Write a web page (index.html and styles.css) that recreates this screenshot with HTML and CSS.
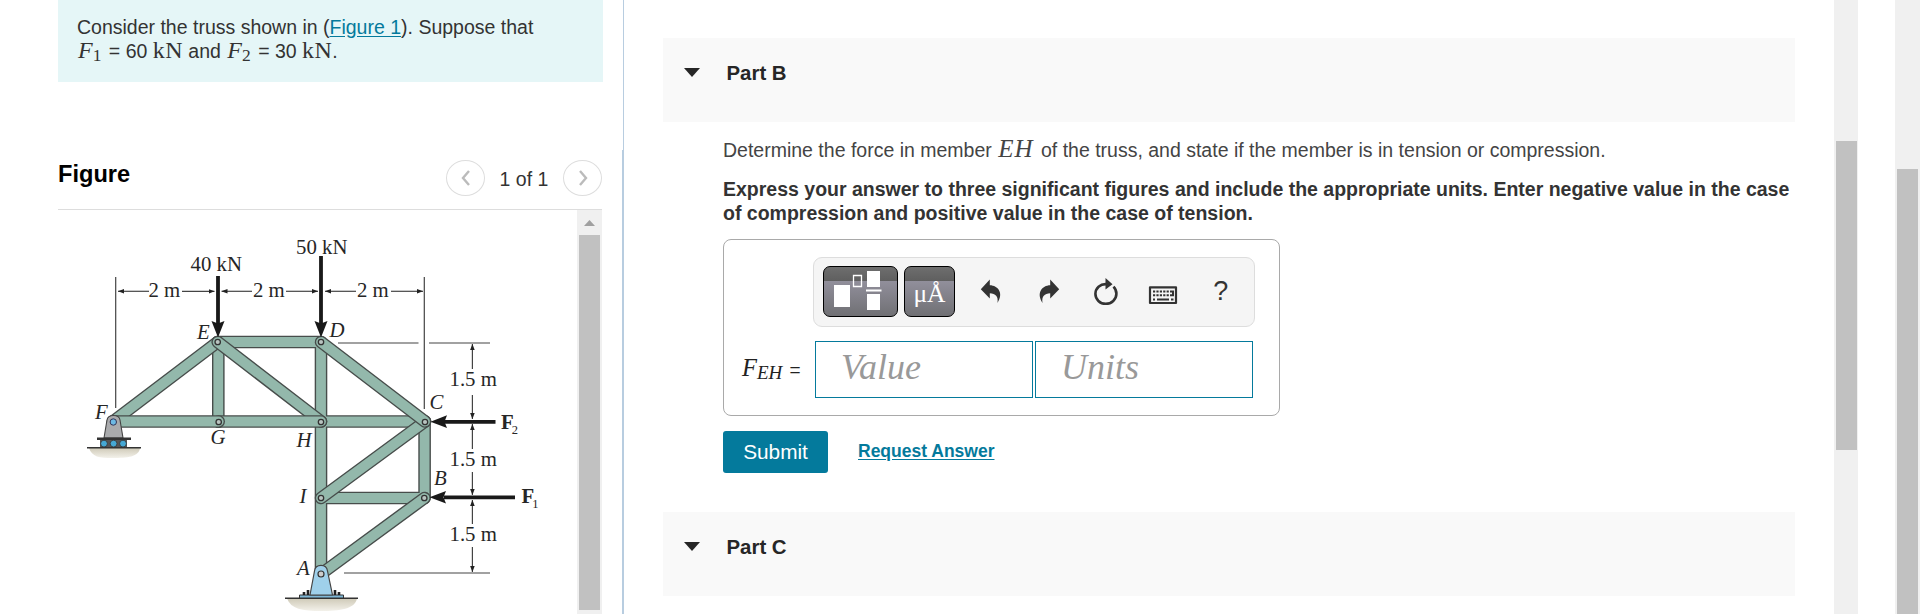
FILE: index.html
```html
<!DOCTYPE html>
<html lang="en">
<head>
    <meta charset="UTF-8">
    <meta name="viewport" content="width=device-width, initial-scale=1.0">
    <title>Truss Problem</title>
    <link rel="stylesheet" href="styles.css">
</head>
<body>

    <!-- Left side: problem statement and figure -->
    <div class="left-panel">
        <div class="problem">
            Consider the truss shown in (<a href="#figure">Figure 1</a>). Suppose that<br>
            <span class="math"><i>F</i><sub>1</sub></span> <span class="eq">=</span> 60 <span class="math unit">kN</span> and <span class="math"><i>F</i><sub>2</sub></span> <span class="eq">=</span> 30 <span class="math unit">kN</span>.
        </div>

        <div class="figure-header">
            <h2>Figure</h2>
            <div class="pager">
                <button class="round" aria-label="Previous"><svg width="12" height="18" viewBox="0 0 12 18"><path d="M9 2L3 9l6 7"/></svg></button>
                <span>1 of 1</span>
                <button class="round" aria-label="Next"><svg width="12" height="18" viewBox="0 0 12 18"><path d="M3 2l6 7-6 7"/></svg></button>
            </div>
        </div>

        <div class="figure-body" id="figure">
            <svg class="truss" width="519" height="404" viewBox="58 210 519 404">
                <defs>
                    <linearGradient id="ground" x1="0" y1="0" x2="0" y2="1">
                        <stop offset="0" stop-color="#cfcab8"/>
                        <stop offset="1" stop-color="#f3f1ea"/>
                    </linearGradient>
                    <marker id="tip" viewBox="0 0 6 6" refX="6" refY="3" markerWidth="6" markerHeight="6" markerUnits="userSpaceOnUse" orient="auto">
                        <path d="M0 .7L6 3 0 5.3z" fill="#222"/>
                    </marker>
                </defs>

                <!-- dimension lines -->
                <g class="dim">
                    <path d="M115.7 277V408M424.3 277V409M338 343H418.5M429 343H490M344 573H490"/>
                    <g marker-end="url(#tip)">
                        <path d="M149 291.3H118"/>
                        <path d="M182 291.3H214.5"/>
                        <path d="M252 291.3H221.5"/>
                        <path d="M286 291.3H318"/>
                        <path d="M356 291.3H325"/>
                        <path d="M391 291.3H423"/>
                        <path d="M472.4 369V344"/>
                        <path d="M472.4 395V419"/>
                        <path d="M472.4 449V424"/>
                        <path d="M472.4 472V495"/>
                        <path d="M472.4 524V500"/>
                        <path d="M472.4 547V572"/>
                    </g>
                </g>

                <!-- ground under F -->
                <path d="M89 448H140C139 457 127 458 113 458S92 457 89 448z" fill="url(#ground)"/>
                <path d="M87 447.7H141" stroke="#333" stroke-width="1.4"/>

                <!-- members -->
                <path class="bar-edge" d="M217.7 342H321M218.3 342V421.5M321 342V574M321 421.5H425M424.6 421.5V498M321 498H424.5"/>
                <path class="bar" d="M217.7 342H321M218.3 342V421.5M321 342V574M321 421.5H425M424.6 421.5V498M321 498H424.5"/>
                <path class="bar-edge" d="M113 421.5L217.7 342"/><path class="bar" d="M113 421.5L217.7 342"/>
                <path class="bar-edge" d="M217.7 342L321 421.5"/><path class="bar" d="M217.7 342L321 421.5"/>
                <path class="bar-edge" d="M321 498L425 421.5"/><path class="bar" d="M321 498L425 421.5"/>
                <path class="bar-edge" d="M321 342L425 421.5"/><path class="bar" d="M321 342L425 421.5"/>
                <path class="bar-edge" d="M321 574L424.5 498"/><path class="bar" d="M321 574L424.5 498"/>
                <path class="bar-edge" d="M218.7 421.5H321"/><path class="bar" d="M218.7 421.5H321"/>
                <path class="bar-edge" d="M113 421.5H218.7"/><path class="bar" d="M113 421.5H218.7"/>

                <!-- pins -->
                <g class="pin">
                    <circle cx="217.7" cy="342" r="2.7"/>
                    <circle cx="321" cy="342" r="2.7"/>
                    <circle cx="218.7" cy="422" r="2.7"/>
                    <circle cx="321" cy="422" r="2.7"/>
                    <circle cx="425" cy="422" r="2.7"/>
                    <circle cx="321" cy="498" r="2.7"/>
                    <circle cx="424.3" cy="498" r="2.7"/>
                </g>

                <!-- roller support -->
                <path d="M104 438L107 420C108 414 119 414 120 420L123 438z" fill="#aaabad" stroke="#444" stroke-width="1.1"/>
                <circle cx="113.3" cy="422" r="3.2" fill="#6cb9e4" stroke="#335" stroke-width="1"/>
                <path d="M97 438.8H131" stroke="#333" stroke-width="2.6"/>
                <path d="M100 440H127V447H100z" fill="#555"/>
                <g fill="#45a8d4" stroke="#333" stroke-width=".8">
                    <circle cx="104" cy="443.6" r="3.4"/>
                    <circle cx="113.6" cy="443.6" r="3.4"/>
                    <circle cx="123" cy="443.6" r="3.4"/>
                </g>

                <!-- fixed support at A -->
                <path d="M287 598.5H357C355 609 340 611 321 611S291 609 287 598.5z" fill="url(#ground)"/>
                <path d="M285 598.3H358" stroke="#333" stroke-width="1.4"/>
                <path d="M299.5 598V595H343.5V598z" fill="#7fb7d6" stroke="#333" stroke-width="1"/>
                <path d="M304 592v3M308 590v5M335 590v5M339 592v3" stroke="#222" stroke-width="2.6"/>
                <path d="M310 595L314.5 571C315.5 563.5 326.5 563.5 327.5 571L332.5 595z" fill="#9fd0ea" stroke="#444" stroke-width="1.2"/>
                <circle cx="321" cy="574" r="3" fill="#ccc" stroke="#333" stroke-width="1.2"/>

                <!-- forces -->
                <path class="force" d="M218 276V324M321 256V324M495.5 421.8H444M515 497.3H444"/>
                <path d="M211.5 321L218 323.5 224.5 321 218 337.5zM314.5 321L321 323.5 327.5 321 321 337.5zM447 415.3L444.5 421.7 447 428 430.5 421.7zM446 491L443.5 497.3 446 503.5 429.5 497.3z" fill="#191919"/>

                <!-- labels -->
                <g class="label">
                    <text x="190.5" y="271">40 kN</text>
                    <text x="296" y="253.7">50 kN</text>
                    <text x="148.5" y="297">2 m</text>
                    <text x="253" y="297">2 m</text>
                    <text x="357" y="297">2 m</text>
                    <text x="449.5" y="386">1.5 m</text>
                    <text x="449.5" y="466">1.5 m</text>
                    <text x="449.5" y="541">1.5 m</text>
                </g>
                <g class="label joint">
                    <text x="197" y="338.5">E</text>
                    <text x="329.5" y="336.5">D</text>
                    <text x="95" y="419">F</text>
                    <text x="210.5" y="443.5">G</text>
                    <text x="296.5" y="447">H</text>
                    <text x="429.5" y="409">C</text>
                    <text x="434" y="485.3">B</text>
                    <text x="299.5" y="502.7">I</text>
                    <text x="297" y="574.7">A</text>
                </g>
                <g class="label">
                    <text x="501" y="428.5"><tspan class="bold">F</tspan><tspan class="small" dx="-2" dy="5">2</tspan></text>
                    <text x="521.5" y="502.5"><tspan class="bold">F</tspan><tspan class="small" dx="-2" dy="5">1</tspan></text>
                </g>
            </svg>
            <div class="scroll figure-scroll">
                <svg width="11" height="6" viewBox="0 0 11 6"><path d="M0 6L5.5 0 11 6z" fill="#a0a0a0"/></svg>
                <div class="thumb"></div>
            </div>
        </div>
    </div>

    <div class="divider"></div>

    <!-- Right side: parts -->
    <div class="right-panel">
        <div class="part-header">
            <span class="arrow"></span>
            <h3>Part B</h3>
        </div>

        <div class="part-body">
            <p class="question">Determine the force in member <span class="math member"><i>EH</i></span> of the truss, and state if the member is in tension or compression.</p>
            <p class="instructions">Express your answer to three significant figures and include the appropriate units. Enter negative value in the case<br>of compression and positive value in the case of tension.</p>

            <div class="answer-box">
                <div class="toolbar">
                    <button class="dark templates" aria-label="Templates">
                        <svg width="73" height="49" viewBox="824 267 73 49">
                            <path d="M834 285h16v22h-16zM867 271h13v16h-13zM867 294h13v16h-13zM866 289.5h15.5v2H866z" fill="#fff"/>
                            <path d="M853.5 275.5h8v11h-8z" fill="none" stroke="#fff" stroke-width="1.3"/>
                        </svg>
                    </button>
                    <button class="dark symbols">μÅ</button>
                    <button class="tool"><svg width="26" height="28" viewBox="0 0 26 28"><path d="M2.8 11.2L11.8 1.5V7.3C20 7.5 26 15 19.5 25C20.5 18 17.5 15.5 11.8 15.2V20.5z"/></svg></button>
                    <button class="tool"><svg width="26" height="28" viewBox="0 0 26 28"><path d="M23.2 11.2L14.2 1.5V7.3C6 7.5 0 15 6.5 25C5.5 18 8.5 15.5 14.2 15.2V20.5z"/></svg></button>
                    <button class="tool"><svg width="26" height="28" viewBox="0 0 26 28"><path d="M12.5 0L19.5 6.2 12.5 11.5z"/><path d="M14 6.2C7 5.5 2.4 10.5 2.4 15.8C2.4 21.5 7 25.8 12.7 25.8C18.5 25.8 23.4 21.5 23.4 15.8C23.4 12.5 22.2 10.5 20.5 8.7" fill="none" stroke="#333" stroke-width="2.6"/></svg></button>
                    <button class="tool"><svg width="30" height="28" viewBox="0 0 30 28"><path d="M2 9.3H28V25H2z" fill="#f5f5f5" stroke="#333" stroke-width="2.2" stroke-linejoin="round"/><path d="M5 13.5H24M5 17.3H24" fill="none" stroke="#333" stroke-width="2" stroke-dasharray="2.2 1.2"/><path d="M25 12.5V18.2M5 21.5H7M9 21.5H21M23 21.5H25.5" fill="none" stroke="#333" stroke-width="2"/></svg></button>
                    <button class="tool help">?</button>
                </div>
                <div class="answer-row">
                    <label class="answer-label"><i>F<sub>EH</sub></i> <span>=</span></label>
                    <input type="text" placeholder="Value" class="value">
                    <input type="text" placeholder="Units" class="units">
                </div>
            </div>

            <div class="actions">
                <button class="submit">Submit</button>
                <a href="#" class="request">Request Answer</a>
            </div>
        </div>

        <div class="part-header">
            <span class="arrow"></span>
            <h3>Part C</h3>
        </div>
    </div>

    <div class="scroll panel-scroll"><div class="thumb"></div></div>
    <div class="scroll page-scroll"><div class="thumb"></div></div>

</body>
</html>
```
FILE: styles.css
```css
* {
    box-sizing: border-box;
}

body {
    display: flex;
    margin: 0;
    height: 614px;
    overflow: hidden;
    background: #fff;
    color: #333;
    font-family: "Liberation Sans", Arial, sans-serif;
    font-size: 19.5px;
}

button {
    padding: 0;
    font-family: inherit;
    cursor: pointer;
}

h2, h3, p {
    margin: 0;
}

a {
    color: #047a9c;
    text-underline-offset: 2px;
}

.math {
    font-family: "Liberation Serif", serif;
    font-size: 24px;
    line-height: 1px;
}

.math sub {
    font-size: 17.5px;
    line-height: 1px;
    vertical-align: -3px;
}

.math i {
    margin-left: 1px;
}

.unit {
    letter-spacing: 0.4px;
}

/* Left panel */
.left-panel {
    width: 545px;
    margin-left: 58px;
    flex: none;
}

.problem {
    height: 82px;
    padding: 15px 19px;
    background: #e5f6f7;
    line-height: 24px;
    white-space: nowrap;
}

.eq {
    margin-left: 2px;
}

.figure-header {
    display: flex;
    justify-content: space-between;
    width: 544px;
    height: 128px;
    padding-top: 78px;
    border-bottom: 1px solid #ddd;
}

.figure-header h2 {
    padding-top: 1px;
    color: #000;
    font-size: 23.6px;
    line-height: 27px;
}

.pager {
    display: flex;
    align-items: center;
    height: 36px;
}

.pager span {
    width: 78px;
    padding-top: 3px;
    text-align: center;
}

.round {
    display: flex;
    align-items: center;
    justify-content: center;
    width: 39px;
    height: 36px;
    background: #fff;
    border: 1px solid #ddd;
    border-radius: 50%;
}

.round path {
    fill: none;
    stroke: #bbb;
    stroke-width: 2.4;
}

.figure-body {
    display: flex;
    height: 404px;
}

.truss {
    display: block;
    flex: none;
}

.dim {
    fill: none;
    stroke: #444;
    stroke-width: 1.2;
}

.bar-edge {
    fill: none;
    stroke: #474d4b;
    stroke-width: 12.6;
    stroke-linecap: round;
}

.bar {
    fill: none;
    stroke: #93b8ab;
    stroke-width: 9.8;
    stroke-linecap: round;
}

.pin {
    fill: #b9c4c0;
    stroke: #333;
    stroke-width: 1.3;
}

.force {
    fill: none;
    stroke: #191919;
    stroke-width: 3.8;
}

.label {
    fill: #262626;
    font-family: "Liberation Serif", serif;
    font-size: 20.8px;
}

.joint {
    font-style: italic;
}

.bold {
    font-weight: bold;
}

.small {
    font-size: 12.5px;
}

/* Scrollbars */
.scroll {
    flex: none;
    background: #f0f0f0;
}

.thumb {
    width: 21px;
    margin-left: 2px;
    background: #c1c1c1;
}

.figure-scroll {
    width: 25px;
    padding-top: 10px;
}

.figure-scroll svg {
    display: block;
    margin: 0 0 9px 7px;
}

.figure-scroll .thumb {
    height: 375px;
}

.panel-scroll {
    width: 24px;
    margin-left: 39px;
    padding-top: 141px;
}

.panel-scroll .thumb {
    height: 309px;
}

.page-scroll {
    width: 25px;
    margin-left: 37px;
    padding-top: 169px;
}

.page-scroll .thumb {
    height: 445px;
}

.divider {
    flex: none;
    width: 2px;
    margin-left: 19px;
    background: linear-gradient(to right, #fff 1px, #b8cde0 1px) top / 100% 150px no-repeat, #b8cde0;
}

/* Right panel */
.right-panel {
    flex: none;
    width: 1132px;
    margin-left: 39px;
    padding-top: 38px;
}

.part-header {
    display: flex;
    height: 84px;
    padding: 23px 21px;
    background: #f9f9f9;
    color: #262626;
}

.part-header h3 {
    margin-left: 26.5px;
    font-size: 20.4px;
    line-height: 24px;
}

.arrow {
    width: 16px;
    height: 9px;
    margin-top: 7px;
    background: #262626;
    clip-path: polygon(0 0, 100% 0, 50% 100%);
}

.part-body {
    height: 390px;
    padding: 16px 0 0 60px;
    white-space: nowrap;
}

.question {
    color: #444;
    line-height: 24px;
}

.member {
    margin-right: 2px;
    font-size: 25px;
    letter-spacing: 1px;
}

.instructions {
    margin-top: 15px;
    font-weight: bold;
    line-height: 24px;
}

.answer-box {
    width: 557px;
    height: 177px;
    margin-top: 14px;
    padding-top: 17px;
    border: 1px solid #a9a9a9;
    border-radius: 8px;
}

.toolbar {
    display: flex;
    align-items: center;
    width: 442px;
    height: 70px;
    margin-left: 89px;
    padding: 0 0 1px 9px;
    background: #f5f5f5;
    border: 1px solid #ddd;
    border-radius: 9px;
}

.dark {
    height: 51px;
    margin-right: 6px;
    background: linear-gradient(#6e6e6e, #5f5f5f 14px, #918f9b 14px, #707074);
    border: 1px solid #000;
    border-radius: 7px;
    color: #fff;
}

.templates {
    width: 75px;
}

.templates svg {
    display: block;
}

.symbols {
    width: 51px;
    padding-top: 4px;
    font-family: "Liberation Serif", serif;
    font-size: 25.5px;
}

.tool {
    display: flex;
    align-items: center;
    justify-content: center;
    width: 57.4px;
    height: 51px;
    background: none;
    border: none;
}

.tool svg {
    fill: #333;
}

.symbols + .tool {
    margin-left: 1.5px;
}

.help {
    color: #333;
    font-size: 27px;
}

.answer-row {
    display: flex;
    align-items: center;
    margin-top: 14px;
}

.answer-label {
    width: 91px;
    padding: 0 0 4px 18px;
    color: #222;
    font-family: "Liberation Serif", serif;
    font-size: 24.5px;
}

.answer-label sub {
    font-size: 19px;
    line-height: 1px;
    vertical-align: -3px;
}

.answer-label span {
    margin-left: 1px;
    font-family: "Liberation Sans", Arial, sans-serif;
    font-size: 19px;
}

.answer-row input {
    width: 218px;
    height: 57px;
    padding: 0 0 5px 25px;
    background: #fff;
    border: 1px solid #047a9c;
    color: #333;
    font-family: "Liberation Serif", serif;
    font-size: 36px;
    font-style: italic;
}

.answer-row input::placeholder {
    color: #999;
}

.answer-row .units {
    margin-left: 2px;
}

.actions {
    display: flex;
    margin-top: 15px;
}

.submit {
    width: 105px;
    height: 42px;
    background: #047a9c;
    border: none;
    border-radius: 3px;
    color: #fff;
    font-size: 20.8px;
}

.request {
    margin: 10px 0 0 30px;
    font-size: 17.5px;
    font-weight: bold;
    line-height: 20px;
}
```
